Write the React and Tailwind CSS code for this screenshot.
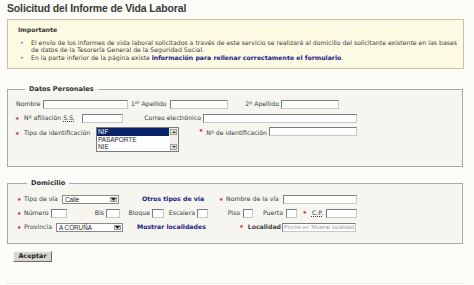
import React from 'react';

// Small building blocks for the old-style form controls
function Field({ className = '', placeholder }) {
  return (
    <input
      type="text"
      placeholder={placeholder}
      className={`h-[9px] border border-t-[#7c7c7c] border-l-[#7c7c7c] border-b-[#c8c8c8] border-r-[#c8c8c8] bg-white px-[1px] text-[5.6px] font-['Liberation_Sans',Arial,sans-serif] placeholder:text-[#9a9a9a] outline-none ${className}`}
    />
  );
}

function Star() {
  return <span className="text-[#c8283c] text-[5px] leading-none">★</span>;
}

function DropBox({ value, className = '' }) {
  return (
    <div className={`flex h-[9px] items-stretch border border-[#8a8a8a] bg-white ${className}`}>
      <span className="flex-1 pl-[2px] text-[6.3px] leading-[7px] text-[#222] font-['Liberation_Sans',Arial,sans-serif]">{value}</span>
      <span className="m-[1px] flex w-[7px] items-center justify-center border border-[#9a9a9a] bg-[#e4e2da]">
        <svg width="5" height="3" viewBox="0 0 5 3"><path d="M0 0h5L2.5 3z" fill="#222" /></svg>
      </span>
    </div>
  );
}

function ListBox() {
  return (
    <div className="flex h-[25px] w-[83px] border border-[#7a7a7a] bg-white">
      <div className="flex flex-1 flex-col text-[6.4px] leading-[7.7px] text-[#222] font-['Liberation_Sans',Arial,sans-serif]">
        <div className="bg-[#0a246a] pl-[1px] text-white">NIF</div>
        <div className="pl-[1px]">PASAPORTE</div>
        <div className="pl-[1px]">NIE</div>
      </div>
      <div className="flex w-[9px] flex-col justify-between bg-[#f0efe9] p-[1px]">
        <span className="flex h-[6px] items-center justify-center border border-[#a0a0a0] bg-[#e4e2da]">
          <svg width="4" height="2" viewBox="0 0 4 2"><path d="M0 2h4L2 0z" fill="#333" /></svg>
        </span>
        <span className="flex h-[6px] items-center justify-center border border-[#a0a0a0] bg-[#e4e2da]">
          <svg width="4" height="2" viewBox="0 0 4 2"><path d="M0 0h4L2 2z" fill="#333" /></svg>
        </span>
      </div>
    </div>
  );
}

export default function App() {
  return (
    <div className="h-[285px] w-[474px] overflow-hidden bg-[#fcfcf8] px-[7px] font-['DejaVu_Sans',Verdana,sans-serif] text-[6.2px] text-[#3a3a3a]">
      <h1 className="pt-[1px] text-[10.5px] font-bold leading-[14px] tracking-[-0.15px] text-[#3a3a3a] font-['Liberation_Sans',Arial,sans-serif]">
        Solicitud del Informe de Vida Laboral
      </h1>

      {/* Aviso */}
      <div className="mt-[4px] h-[50px] w-[457px] border border-[#c6c2aa] bg-[#fefbe4] pl-[10px] pt-[6px]">
        <div className="font-bold leading-[8px] text-[#333]">Importante</div>
        <ul className="mt-[5px] leading-[7.4px] text-[#3a3a3a]">
          <li className="flex whitespace-nowrap">
            <span className="w-[13px] pl-[3px] text-[#8a8a8a] text-[5px]">▸</span>
            <span>
              El envío de los informes de vida laboral solicitados a través de este servicio se realizará al domicilio del solicitante existente en las bases
              <br />
              de datos de la Tesorería General de la Seguridad Social.
            </span>
          </li>
          <li className="flex whitespace-nowrap">
            <span className="w-[13px] pl-[3px] text-[#8a8a8a] text-[5px]">▸</span>
            <span>
              En la parte inferior de la página existe{' '}
              <a className="font-bold text-[#1a1a86]">información para rellenar correctamente el formulario</a>.
            </span>
          </li>
        </ul>
      </div>

      {/* Datos personales */}
      <fieldset className="mt-[16px] w-[456px] border border-[#a9a9a9] bg-[#f6f5f0] pb-[14px] pl-[7px]">
        <legend className="ml-[10px] px-[4px] text-[6.6px] font-bold leading-[8px] text-[#333]">Datos Personales</legend>
        <div className="flex flex-col pt-[4px] whitespace-nowrap text-[#3a3a3a]">
          <div className="flex h-[14px] items-center">
            <span className="ml-[1px] w-[27px]">Nombre</span>
            <Field className="w-[85px]" />
            <span className="w-[42px] pl-[3px]">1<sup className="text-[4.5px]">er</sup> Apellido</span>
            <Field className="w-[58px]" />
            <span className="w-[53px] pr-[2px] text-right">2º Apellido</span>
            <Field className="w-[58px]" />
          </div>
          <div className="flex h-[14px] items-center">
            <span className="w-[9px]"><Star /></span>
            <span className="w-[58px] text-[#3a3a3a]">Nº afiliación <abbr className="text-[#3a3a3a] underline decoration-dotted">S.S.</abbr></span>
            <Field className="w-[41px]" />
            <span className="w-[80px] pr-[2px] text-right">Correo electrónico</span>
            <Field className="w-[154px]" />
          </div>
          <div className="flex items-start pt-[2px]">
            <span className="mt-[1px] w-[9px]"><Star /></span>
            <span className="mt-[1px] w-[72px] text-[#3a3a3a]">Tipo de identificación</span>
            <ListBox />
            <span className="mt-[1px] flex w-[90px] justify-end gap-[3px] pr-[2px]">
              <Star />
              <span className="text-[#3a3a3a]">Nº de identificación</span>
            </span>
            <Field className="w-[88px]" />
          </div>
        </div>
      </fieldset>

      {/* Domicilio */}
      <fieldset className="mt-[12px] w-[456px] border border-[#a9a9a9] bg-[#f6f5f0] pb-[9px] pl-[9px]">
        <legend className="ml-[10px] px-[4px] text-[6.6px] font-bold leading-[8px] text-[#333]">Domicilio</legend>
        <div className="flex flex-col pt-[5px] whitespace-nowrap text-[#3a3a3a]">
          <div className="flex h-[14px] items-center">
            <span className="w-[7px]"><Star /></span>
            <span className="w-[38px]">Tipo de vía</span>
            <DropBox value="Calle" className="w-[57px]" />
            <span className="w-[100px] pl-[23px]">
              <a className="font-bold text-[#1a1a86]">Otros tipos de vía</a>
            </span>
            <span className="w-[7px]"><Star /></span>
            <span className="w-[57px]">Nombre de la vía</span>
            <Field className="w-[74px]" />
          </div>
          <div className="flex h-[14px] items-center">
            <span className="w-[7px]"><Star /></span>
            <span className="w-[27px]">Número</span>
            <Field className="w-[16px]" />
            <span className="w-[39px] pr-[2px] text-right">Bis</span>
            <Field className="w-[14px]" />
            <span className="w-[32px] pr-[2px] text-right">Bloque</span>
            <Field className="w-[12px]" />
            <span className="w-[33px] pr-[2px] text-right">Escalera</span>
            <Field className="w-[11px]" />
            <span className="w-[35px] pr-[3px] text-right">Piso</span>
            <Field className="w-[10px]" />
            <span className="w-[33px] pr-[3px] text-right">Puerta</span>
            <Field className="w-[11px]" />
            <span className="flex w-[29px] items-center justify-end gap-[5px] pr-[3px]">
              <Star />
              <abbr className="text-[#3a3a3a] underline decoration-dotted">C.P.</abbr>
            </span>
            <Field className="w-[31px]" />
          </div>
          <div className="flex h-[14px] items-center">
            <span className="w-[7px]"><Star /></span>
            <span className="w-[32px]">Provincia</span>
            <DropBox value="A CORUÑA" className="w-[67px]" />
            <span className="w-[105px] pl-[14px]">
              <a className="font-bold text-[#1a1a86]">Mostrar localidades</a>
            </span>
            <span className="flex w-[54px] items-center justify-end gap-[4px] pr-[1px]">
              <Star />
              <span className="font-bold text-[#444]">Localidad</span>
            </span>
            <Field className="w-[74px]" placeholder="Pinche en 'Mostrar localidades'" />
          </div>
        </div>
      </fieldset>

      <button className="ml-[6px] mt-[7px] h-[11px] w-[39px] border border-t-[#f4f4f4] border-l-[#f4f4f4] border-b-[#6a6a6a] border-r-[#6a6a6a] bg-[#d8d6ce] text-[6.4px] font-bold leading-[9px] text-[#222]">
        Aceptar
      </button>

      <hr className="mt-[21px] w-[457px] border-t border-[#ebebe6]" />
    </div>
  );
}
